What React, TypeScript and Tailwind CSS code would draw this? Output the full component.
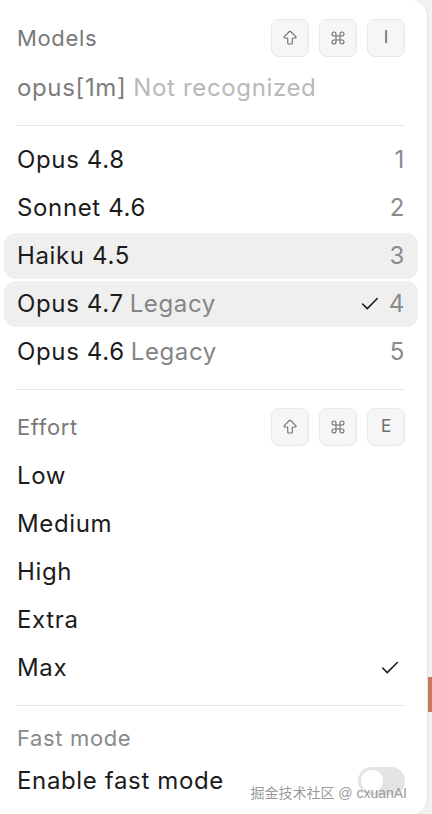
import { ArrowBigUp, Command, Check } from "lucide-react";

const font = { fontFamily: "Inter, 'Noto Sans', sans-serif" };

const Key = ({ children }: { children: React.ReactNode }) => (
  <div className="flex h-[38px] w-[38px] items-center justify-center rounded-lg border border-[#e8e8e8] bg-[#f6f6f6] text-[17px] tracking-normal text-[#6f6f6f]">
    {children}
  </div>
);

const Header = ({ title, last }: { title: string; last: string }) => (
  <div className="flex h-[38px] items-center justify-between">
    <span className="text-[22px] text-[#787878]">{title}</span>
    <div className="flex gap-[10px]">
      <Key>
        <ArrowBigUp className="h-[18px] w-[18px]" strokeWidth={1.5} />
      </Key>
      <Key>
        <Command className="h-[16px] w-[16px]" strokeWidth={1.6} />
      </Key>
      <Key>{last}</Key>
    </div>
  </div>
);

type Model = { name: string; tag?: string; n: number; hl?: boolean; checked?: boolean };

const models: Model[] = [
  { name: "Opus 4.8", n: 1 },
  { name: "Sonnet 4.6", n: 2 },
  { name: "Haiku 4.5", n: 3, hl: true },
  { name: "Opus 4.7", tag: "Legacy", n: 4, hl: true, checked: true },
  { name: "Opus 4.6", tag: "Legacy", n: 5 },
];

const efforts = ["Low", "Medium", "High", "Extra", "Max"];

const Divider = () => <div className="my-[13px] h-px bg-[#e6e6e6]" />;

export default function App() {
  return (
    <div className="flex min-h-screen w-[432px] bg-[#f1f1f1]" style={font}>
      <div className="relative h-[814px] w-[428px] overflow-hidden rounded-r-2xl border-r border-[#e2e2e2] bg-white pl-[17px] pr-[22px] pt-[19px] tracking-[0.04em]">
        {/* Models */}
        <Header title="Models" last="I" />
        <div className="mt-[7px] flex h-12 items-center text-[24px]">
          <span className="text-[#7c7c7c]">opus[1m]</span>
          <span className="ml-[7px] text-[#b9b9b9]">Not recognized</span>
        </div>
        <Divider />
        <div className="-mx-[13px] mt-[-3px]">
          {models.map((m) => (
            <div key={m.n} className="h-12 py-px">
              <div
                className={`flex h-[46px] items-center justify-between rounded-xl px-[13px] text-[24px] ${
                  m.hl ? "bg-[#efefef]" : ""
                }`}
              >
                <span className="text-[#1c1c1c]">
                  {m.name}
                  {m.tag && <span className="ml-[6px] text-[#858585]">{m.tag}</span>}
                </span>
                <span className="flex items-center gap-[8px] text-[#8a8a8a]">
                  {m.checked && <Check className="h-[22px] w-[22px] text-[#1c1c1c]" strokeWidth={1.7} />}
                  {m.n}
                </span>
              </div>
            </div>
          ))}
        </div>
        <Divider />

        {/* Effort */}
        <div className="pt-[5px]">
          <Header title="Effort" last="E" />
        </div>
        <div className="mt-[6px]">
          {efforts.map((e) => (
            <div key={e} className="flex h-12 items-center justify-between text-[24px] text-[#1c1c1c]">
              <span>{e}</span>
              {e === "Max" && <Check className="mr-[4px] h-[22px] w-[22px]" strokeWidth={1.7} />}
            </div>
          ))}
        </div>
        <Divider />

        {/* Fast mode */}
        <div className="flex h-[38px] items-center text-[22px] text-[#8a8a8a]">Fast mode</div>
        <div className="flex h-12 items-center justify-between text-[24px] text-[#1c1c1c]">
          <span>Enable fast mode</span>
          <div className="flex h-[28px] w-[47px] items-center rounded-full bg-[#e4e4e4] p-[3px]">
            <div className="h-[22px] w-[22px] rounded-full bg-white" />
          </div>
        </div>

        <div
          className="absolute bottom-[10px] right-[20px] text-[14px] tracking-normal text-[#9a9a9a]"
          style={{ fontFamily: "'Liberation Sans', 'Noto Sans CJK SC', sans-serif" }}
        >
          掘金技术社区 @ cxuanAI
        </div>
      </div>
      <div className="flex w-1 flex-col">
        <div className="mt-[677px] h-[35px] bg-[#c8765c]" />
      </div>
    </div>
  );
}
